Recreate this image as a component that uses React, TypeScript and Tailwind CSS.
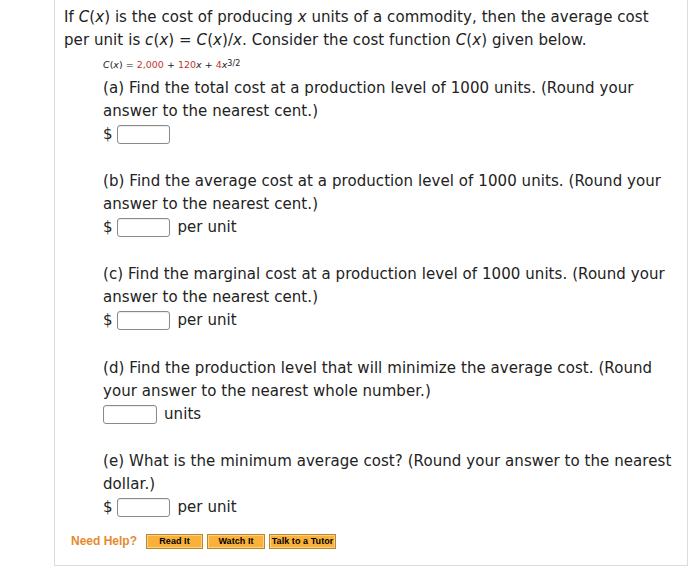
import React from "react";

const Inp = ({ w = "w-[53px]" }: { w?: string }) => (
  <span className={`inline-block ${w} h-[19px] rounded-[3px] border border-[#8a8a8a] bg-white align-middle shadow-[inset_0_1px_1px_rgba(0,0,0,0.08)]`} />
);

const I = ({ children }: { children: React.ReactNode }) => <i>{children}</i>;

const Row = ({ children }: { children: React.ReactNode }) => (
  <div className="h-[23px] flex items-center whitespace-nowrap">{children}</div>
);

const Btn = ({ children, w }: { children: React.ReactNode; w: string }) => (
  <span className={`inline-flex ${w} h-[15px] items-center justify-center border border-[#b8862e] bg-[#f9b13a] shadow-[inset_0_0_0_1px_#fcd184] text-[9px] font-bold text-black font-['Liberation_Sans',Arial,sans-serif]`}>
    {children}
  </span>
);

export default function App() {
  return (
    <div className="w-[700px] h-[567px] bg-white overflow-hidden font-['DejaVu_Sans',Verdana,sans-serif] text-[15px] tracking-[0.07px] text-[#222] leading-[23px]">
      <div className="ml-[54px] w-[634px] h-[566px] border-l border-r border-b border-[#dcdcdc] pt-[6px] pl-[9px]">
        <Row>
          If&nbsp;<I>C</I>(<I>x</I>)&nbsp;is the cost of producing&nbsp;<I>x</I>&nbsp;units of a commodity, then the average cost
        </Row>
        <Row>
          per unit is&nbsp;<I>c</I>(<I>x</I>) =&nbsp;<I>C</I>(<I>x</I>)/<I>x</I>. Consider the cost function&nbsp;<I>C</I>(<I>x</I>)&nbsp;given below.
        </Row>
        <div className="pl-[39px]">
          <div className="h-[25px] flex items-center text-[9.5px] tracking-normal whitespace-nowrap">
            <I>C</I>(<I>x</I>) =&nbsp;<span className="text-[#c0392b]">2,000</span>&nbsp;+&nbsp;
            <span className="text-[#c0392b]">120</span><I>x</I>&nbsp;+&nbsp;<span className="text-[#c0392b]">4</span><I>x</I>
            <sup className="text-[8px] relative -top-[1px]">3/2</sup>
          </div>
          <div className="mt-[0px]">
            <Row>(a) Find the total cost at a production level of 1000 units. (Round your</Row>
            <Row>answer to the nearest cent.)</Row>
            <Row>$&nbsp;<Inp /></Row>
          </div>
          <div className="mt-[24px]">
            <Row>(b) Find the average cost at a production level of 1000 units. (Round your</Row>
            <Row>answer to the nearest cent.)</Row>
            <Row>$&nbsp;<Inp /><span className="ml-[7px]">per unit</span></Row>
          </div>
          <div className="mt-[24px]">
            <Row>(c) Find the marginal cost at a production level of 1000 units. (Round your</Row>
            <Row>answer to the nearest cent.)</Row>
            <Row>$&nbsp;<Inp /><span className="ml-[7px]">per unit</span></Row>
          </div>
          <div className="mt-[25px]">
            <Row>(d) Find the production level that will minimize the average cost. (Round</Row>
            <Row>your answer to the nearest whole number.)</Row>
            <Row><Inp w="w-[54px]" /><span className="ml-[7px]">units</span></Row>
          </div>
          <div className="mt-[24px]">
            <Row>(e) What is the minimum average cost? (Round your answer to the nearest</Row>
            <Row>dollar.)</Row>
            <Row>$&nbsp;<Inp /><span className="ml-[7px]">per unit</span></Row>
          </div>
        </div>
        <div className="mt-[11px] ml-[7px] flex items-center gap-[4px]">
          <span className="font-['Liberation_Sans',Arial,sans-serif] font-bold text-[12px] tracking-normal text-[#e58a2e] mr-[5px]">Need Help?</span>
          <Btn w="w-[57px]">Read It</Btn>
          <Btn w="w-[58px]">Watch It</Btn>
          <Btn w="w-[67px]">Talk to a Tutor</Btn>
        </div>
      </div>
    </div>
  );
}
